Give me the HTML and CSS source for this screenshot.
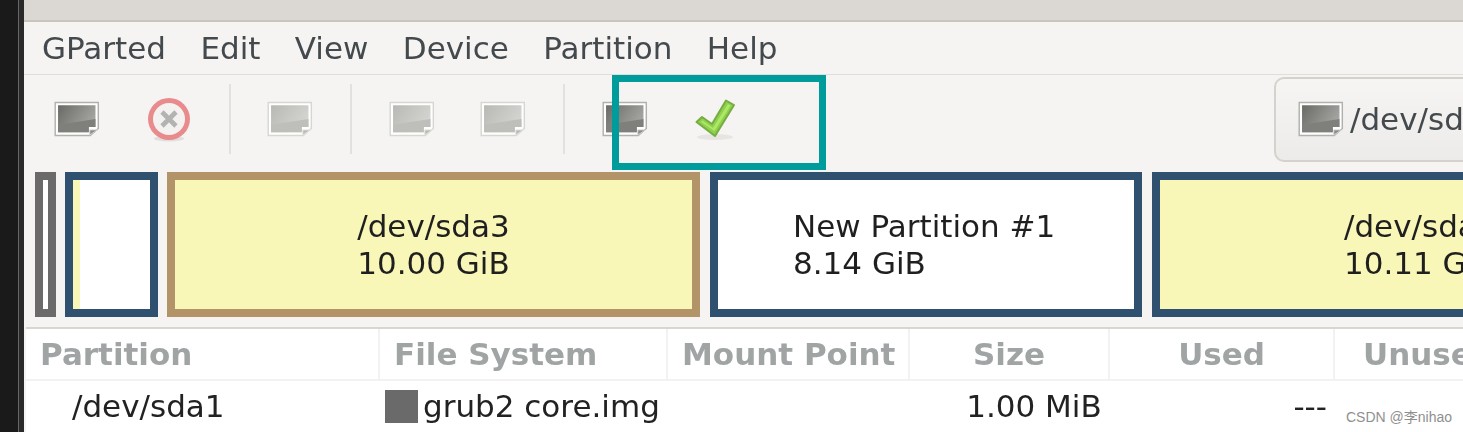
FILE: index.html
```html
<!DOCTYPE html>
<html lang="en">
<head>
    <meta charset="UTF-8">
    <meta name="viewport" content="width=device-width, initial-scale=1.0">
    <title>GParted</title>
    <link rel="stylesheet" href="styles.css">
</head>
<body>
    <svg class="defs" width="0" height="0">
        <defs>
            <linearGradient id="diskFace" x1="0" y1="0" x2="1" y2="0.5">
                <stop offset="0" stop-color="#696a65"/>
                <stop offset="1" stop-color="#a6a7a3"/>
            </linearGradient>
            <linearGradient id="diskFaceOff" x1="0" y1="0" x2="1" y2="0.5">
                <stop offset="0" stop-color="#b8b8b4"/>
                <stop offset="1" stop-color="#d4d4d0"/>
            </linearGradient>
            <symbol id="disk" viewBox="0 0 48 38">
                <path d="M1 1.5H46.5V29L38 36.5H1Z" fill="#fff" stroke="#b0b0ac" stroke-width="1.5"/>
                <path d="M4 4.5H43.5V27.5H36.5V33H4Z" fill="url(#diskFace)"/>
                <path d="M4 25L43.5 19V27.5H36.5V33H4Z" fill="#7f807b"/>
                <path d="M37.5 36V30.5H45.5Z" fill="#8d8d89" stroke="#d2d2ce"/>
            </symbol>
            <symbol id="diskOff" viewBox="0 0 48 38">
                <path d="M1 1.5H46.5V29L38 36.5H1Z" fill="#fff" stroke="#d6d6d2" stroke-width="1.5"/>
                <path d="M4 4.5H43.5V27.5H36.5V33H4Z" fill="url(#diskFaceOff)"/>
                <path d="M4 25L43.5 19V27.5H36.5V33H4Z" fill="#bebeba"/>
                <path d="M37.5 36V30.5H45.5Z" fill="#bbbbb7" stroke="#e2e2de"/>
            </symbol>
        </defs>
    </svg>

    <div class="screen-edge"></div>

    <div class="window">
        <div class="titlebar"></div>

        <div class="menubar">
            <span>GParted</span>
            <span>Edit</span>
            <span>View</span>
            <span>Device</span>
            <span>Partition</span>
            <span>Help</span>
        </div>

        <div class="toolbar">
            <svg class="tool disk-icon tool-new"><use href="#disk"/></svg>
            <svg class="tool tool-cancel" width="44" height="44" viewBox="0 0 44 44">
                <ellipse cx="22" cy="40.5" rx="15" ry="3" fill="#e0dfdc"/>
                <circle cx="22" cy="21" r="21" fill="#e98b8d"/>
                <circle cx="22" cy="21" r="16" fill="#f3f2f0"/>
                <path d="M15 14L29 28M29 14L15 28" stroke="#b3b3b0" stroke-width="4.6" fill="none"/>
            </svg>
            <div class="sep"></div>
            <svg class="tool disk-icon tool-resize"><use href="#diskOff"/></svg>
            <div class="sep sep-second"></div>
            <svg class="tool disk-icon tool-copy"><use href="#diskOff"/></svg>
            <svg class="tool disk-icon tool-paste"><use href="#diskOff"/></svg>
            <div class="sep sep-third"></div>
            <svg class="tool disk-icon tool-undo"><use href="#disk"/></svg>
            <svg class="tool tool-apply" width="44" height="44" viewBox="0 0 44 44">
                <ellipse cx="20" cy="39" rx="18" ry="3" fill="#e6e5e2"/>
                <path d="M1.5 24L7 19L17 26L31 2.5L39 7L20 38Z" fill="#8fd14f" stroke="#76ad42" stroke-width="2" stroke-linejoin="round"/>
                <path d="M6 24L7.5 22.5L18 30L33 6L35.5 7.5L19.5 33Z" fill="#aee866"/>
            </svg>
            <div class="device-button">
                <svg class="disk-icon"><use href="#disk"/></svg>
                <span>/dev/sda</span>
            </div>
        </div>

        <div class="partition-map">
            <div class="part part-unalloc"></div>
            <div class="part part-small"><div class="used-strip"></div></div>
            <div class="part part-sda3">
                <p>/dev/sda3<br>10.00 GiB</p>
            </div>
            <div class="part part-new">
                <p>New Partition #1<br>8.14 GiB</p>
            </div>
            <div class="part part-sda5">
                <p>/dev/sda5<br>10.11 GiB</p>
            </div>
        </div>

        <div class="table">
            <div class="row head">
                <div class="col col-partition">Partition</div>
                <div class="col col-fs">File System</div>
                <div class="col col-mount">Mount Point</div>
                <div class="col col-size">Size</div>
                <div class="col col-used">Used</div>
                <div class="col col-unused">Unused</div>
            </div>
            <div class="row body-row">
                <div class="col col-partition">/dev/sda1</div>
                <div class="col col-fs"><i class="swatch"></i>grub2 core.img</div>
                <div class="col col-mount"></div>
                <div class="col col-size">1.00 MiB</div>
                <div class="col col-used">---</div>
                <div class="col col-unused"></div>
            </div>
        </div>
    </div>

    <div class="highlight"></div>
    <div class="watermark">CSDN @李nihao</div>
</body>
</html>
```

FILE: styles.css
```css
html, body {
    margin: 0;
    height: 432px;
    overflow: hidden;
}

body {
    display: flex;
    position: relative;
    width: 1463px;
    background: #f5f4f2;
    font-family: "DejaVu Sans", sans-serif;
    color: #2e3436;
}

.defs {
    position: absolute;
}

.screen-edge {
    width: 18px;
    margin-right: 6px;
    flex: none;
    background: #1a1a1a;
    box-shadow: 1px 0 0 #666, 6px 0 0 #2a2a2a;
}

.window {
    flex: 1;
    min-width: 0;
    filter: blur(0.6px);
}

.titlebar {
    height: 20px;
    background: #dbd8d3;
    border-bottom: 2px solid #c9c5be;
}

.menubar {
    height: 52px;
    display: flex;
    align-items: center;
    gap: 34.4px;
    padding-left: 18px;
    font-size: 31px;
    color: #43494c;
    border-bottom: 1px solid #e0dedb;
}

.toolbar {
    height: 97px;
    display: flex;
    align-items: center;
    position: relative;
}

.tool {
    flex: none;
}

.disk-icon {
    width: 46px;
    height: 36px;
    flex: none;
}

.tool-new {
    margin-left: 30px;
    margin-right: 1px;
    margin-top: -10px;
}

.tool-cancel {
    margin-left: 46px;
    margin-top: -7px;
}

.sep {
    width: 2px;
    height: 70px;
    margin-left: 38px;
    margin-top: -10px;
    background: #e3e1de;
    flex: none;
}

.tool-resize {
    margin-left: 36px;
    margin-right: 1px;
    margin-top: -10px;
}

.sep-second {
    margin-left: 36px;
}

.tool-copy {
    margin-left: 37px;
    margin-right: 1px;
    margin-top: -10px;
}

.tool-paste {
    margin-left: 44px;
    margin-right: 1px;
    margin-top: -10px;
}

.sep-third {
    margin-left: 36px;
}

.tool-undo {
    margin-left: 37px;
    margin-right: 1px;
    margin-top: -10px;
}

.tool-apply {
    margin-left: 46px;
    margin-top: -8px;
}

.device-button {
    margin-left: 535px;
    margin-top: -9px;
    width: 260px;
    height: 85px;
    flex: none;
    display: flex;
    align-items: center;
    gap: 6px;
    padding-left: 22px;
    box-sizing: border-box;
    border: 2px solid #d5d2cd;
    border-right: 0;
    border-radius: 10px 0 0 10px;
    background: linear-gradient(#f6f5f3, #ecebe9);
    font-size: 31px;
    color: #43494c;
}

.partition-map {
    height: 145px;
    display: flex;
    gap: 8px;
    padding-left: 11px;
}

.part {
    flex: none;
    box-sizing: border-box;
    border: 8px solid #30506f;
    background: #fff;
    display: flex;
    align-items: center;
    justify-content: center;
    position: relative;
    font-size: 31px;
    color: #1f1f1f;
}

.part p {
    margin: 0;
    line-height: 37px;
}

.part-unalloc {
    width: 21px;
    border-color: #6a6a6a;
    margin-right: 1px;
}

.part-small {
    width: 93px;
    margin-right: 1px;
    justify-content: flex-start;
    align-items: stretch;
}

.used-strip {
    width: 7px;
    background: #f8f7b7;
}

.part-sda3 {
    width: 533px;
    border-color: #b39468;
    background: #f8f7b7;
    margin-right: 2px;
}

.part-new {
    width: 432px;
    justify-content: flex-start;
    padding-left: 75px;
    margin-right: 2px;
}

.part-sda5 {
    width: 400px;
    background: #f8f7b7;
    justify-content: flex-start;
    padding-left: 184px;
}

.table {
    margin-top: 10px;
    border-top: 2px solid #d9d6d1;
    background: #fff;
    height: 200px;
    margin-left: 2px;
}

.row {
    display: flex;
    align-items: center;
}

.head {
    height: 50px;
    font-weight: bold;
    font-size: 31px;
    color: #a0a4a5;
    border-bottom: 2px solid #f3f2f1;
}

.head .col {
    height: 100%;
    display: flex;
    align-items: center;
    border-right: 2px solid #f3f2f1;
}

.body-row {
    height: 50px;
    font-size: 31px;
    color: #222;
}

.col {
    flex: none;
    white-space: nowrap;
    box-sizing: border-box;
}

.col-partition {
    width: 354px;
    padding-left: 14px;
}

.body-row .col-partition {
    padding-left: 46px;
}

.col-fs {
    width: 288px;
    padding-left: 14px;
}

.body-row .col-fs {
    padding-left: 5px;
    display: flex;
    align-items: center;
}

.swatch {
    width: 33px;
    height: 33px;
    margin-right: 5px;
    background: #6a6a6a;
    flex: none;
}

.col-mount {
    width: 242px;
    padding-left: 14px;
}

.col-size {
    width: 200px;
    text-align: center;
}

.head .col-size {
    justify-content: center;
}

.body-row .col-size {
    padding-left: 48px;
}

.col-used {
    width: 225px;
}

.head .col-used {
    justify-content: flex-end;
    padding-right: 68px;
}

.body-row .col-used {
    text-align: right;
    padding-right: 8px;
}

.col-unused {
    padding-left: 28px;
}

.highlight {
    position: absolute;
    left: 612px;
    top: 75px;
    width: 214px;
    height: 95px;
    box-sizing: border-box;
    border: 7px solid #009b9b;
}

.watermark {
    position: absolute;
    right: 11px;
    top: 406px;
    font-family: "Liberation Sans", "Noto Sans CJK SC", sans-serif;
    font-size: 14px;
    color: #8f8f8f;
}
```
